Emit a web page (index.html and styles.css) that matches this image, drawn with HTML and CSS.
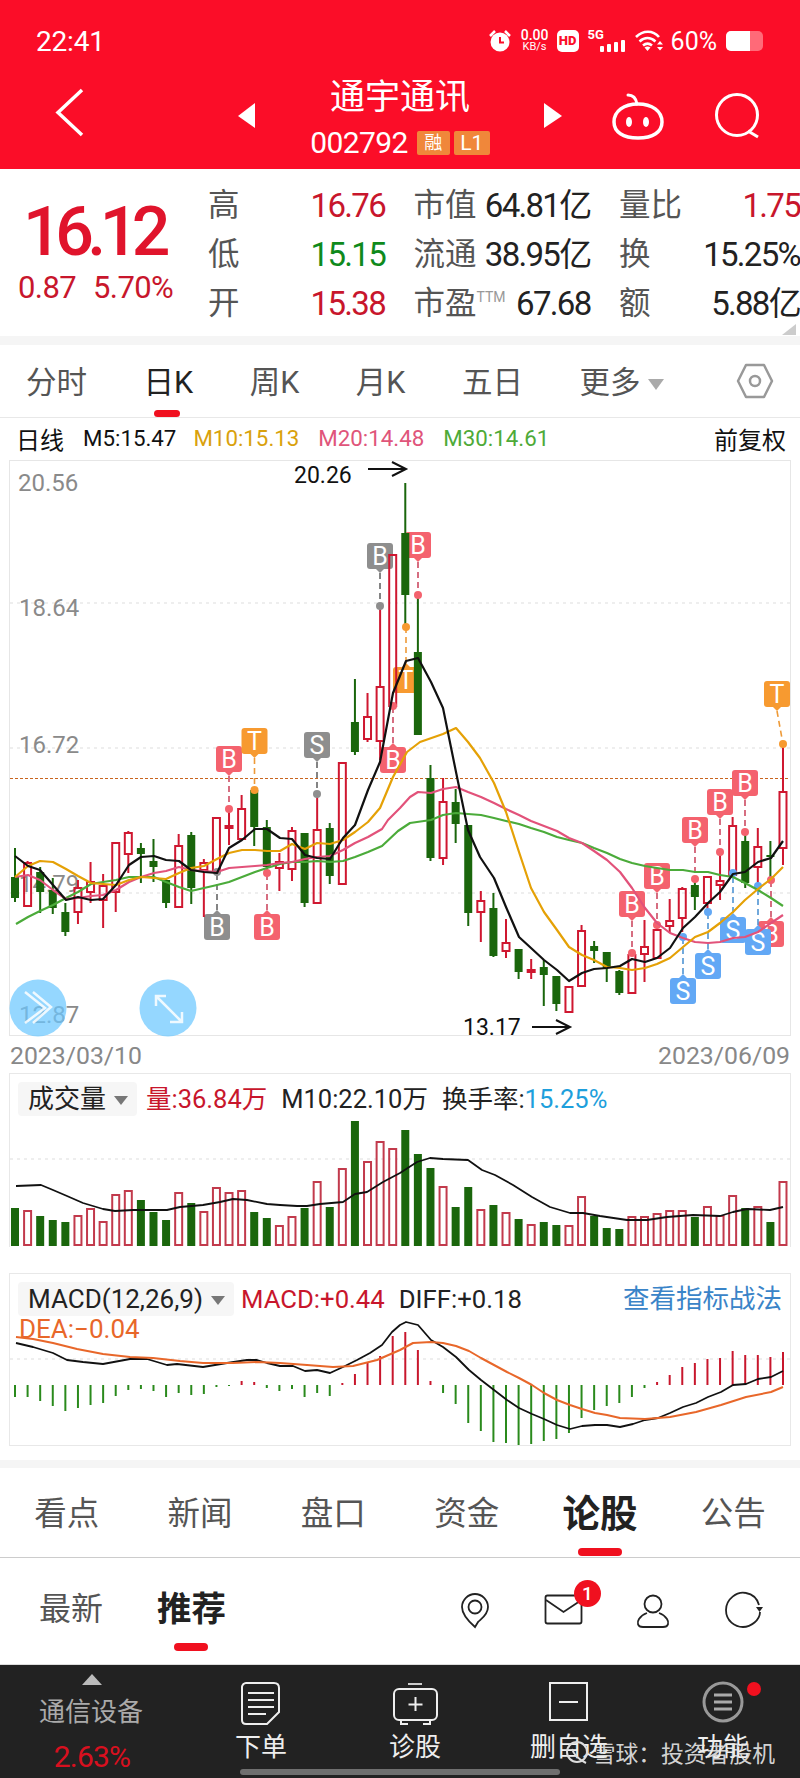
FILE: index.html
```html
<!DOCTYPE html>
<html lang="zh-CN">

<head>
    <meta charset="UTF-8">
    <meta name="viewport" content="width=device-width, initial-scale=1.0">
    <title>通宇通讯 002792</title>
    <link rel="stylesheet" href="styles.css">
</head>

<body>
    <div id="page">
        <div class="topbar">
            <div class="status">
                <span class="clock">22:41</span>
                <div class="status-icons">
                    <svg class="ico-alarm" viewBox="487 29 24 24">
                        <circle cx="499" cy="42" r="9.5" fill="#fff" />
                        <path d="M499 37v5.5h4" fill="none" stroke="#fb0d28" stroke-width="2" />
                        <path d="M489 36l5-5M509 36l-5-5" fill="none" stroke="#fff" stroke-width="2.5" />
                    </svg>
                    <div class="speed"><b>0.00</b><span>KB/s</span></div>
                    <span class="hd">HD</span>
                    <div class="signal">
                        <b>5G</b>
                        <i class="bar1"></i><i class="bar2"></i><i class="bar3"></i><i class="bar4"></i>
                    </div>
                    <svg class="ico-wifi" viewBox="632 29 30 24">
                        <path d="M634 37c7-7 17-7 23 0M637.500 41.500c5-4.500 11-4.500 16 0M641 45.500c3-2.500 6-2.500 9 0" fill="none" stroke="#fff" stroke-width="2.600" />
                        <path d="M645.500 51l-3-3.500c2-1.500 4-1.500 6 0z" fill="#fff" />
                        <path d="M655 44.500h6l-3-3.500zM655 47h6l-3 3.500z" fill="#fff" />
                    </svg>
                    <span class="battery-pct">60%</span>
                    <div class="battery"><i></i></div>
                </div>
            </div>
            <div class="nav">
                <div class="nav-left">
                    <svg class="ico-back" viewBox="54 88 32 52">
                        <path d="M82 91L58 113.500L82 136" fill="none" stroke="#fff" stroke-width="3.500" />
                    </svg>
                </div>
                <div class="nav-mid">
                    <svg class="ico-tri" viewBox="238 103 18 26"><path d="M255 103L238 116L255 128z" fill="#fff" /></svg>
                    <div class="stock">
                        <div class="stock-name">通宇通讯</div>
                        <div class="stock-code">002792<span class="tag">融</span><span class="tag tag-l1">L1</span></div>
                    </div>
                    <svg class="ico-tri" viewBox="544 103 18 26"><path d="M544 103L562 116L544 128z" fill="#fff" /></svg>
                </div>
                <div class="nav-right">
                    <svg class="ico-bot" viewBox="608 90 58 52">
                        <path d="M628 93c5 0 8 3 9 9" fill="none" stroke="#fff" stroke-width="3" stroke-linecap="round" />
                        <path d="M614 120c0-11 10-18 24-18s24 7 24 18c0 10-9 16-24 16s-24-6-24-16z" fill="none" stroke="#fff" stroke-width="3.500" />
                        <ellipse cx="629" cy="120" rx="3" ry="5" fill="#fff" />
                        <ellipse cx="646" cy="120" rx="3" ry="5" fill="#fff" />
                    </svg>
                    <svg class="ico-search" viewBox="712 90 50 50">
                        <circle cx="737" cy="114" r="20.500" fill="none" stroke="#fff" stroke-width="3" />
                        <path d="M748 130l10 6" fill="none" stroke="#fff" stroke-width="3" />
                    </svg>
                </div>
            </div>
        </div>

        <div class="quote">
            <div class="price-box">
                <div class="price">16.12</div>
                <div class="change"><span>0.87</span><span>5.70%</span></div>
            </div>
            <div class="stats">
                <div class="stat"><span class="k">高</span><span class="v red">16.76</span></div>
                <div class="stat"><span class="k">市值</span><span class="v">64.81亿</span></div>
                <div class="stat"><span class="k">量比</span><span class="v red">1.75</span></div>
                <div class="stat"><span class="k">低</span><span class="v green">15.15</span></div>
                <div class="stat"><span class="k">流通</span><span class="v">38.95亿</span></div>
                <div class="stat"><span class="k">换</span><span class="v">15.25%</span></div>
                <div class="stat"><span class="k">开</span><span class="v red">15.38</span></div>
                <div class="stat"><span class="k">市盈<sup>TTM</sup></span><span class="v">67.68</span></div>
                <div class="stat"><span class="k">额</span><span class="v">5.88亿</span></div>
            </div>
            <i class="corner"></i>
        </div>

        <div class="period-tabs">
            <span class="period">分时</span>
            <span class="period active">日K</span>
            <span class="period">周K</span>
            <span class="period">月K</span>
            <span class="period">五日</span>
            <span class="period">更多<i class="caret"></i></span>
            <svg class="ico-hex" viewBox="736 362 38 38">
                <path d="M746 365h18l8 16l-8 16h-18l-8-16z" fill="none" stroke="#999" stroke-width="2.500" stroke-linejoin="round" />
                <circle cx="755" cy="381" r="5" fill="none" stroke="#999" stroke-width="2.500" />
            </svg>
        </div>

        <div class="ma-legend">
            <span class="ma-name">日线</span>
            <span class="c-m5">M5:15.47</span>
            <span class="c-m10">M10:15.13</span>
            <span class="c-m20">M20:14.48</span>
            <span class="c-m30">M30:14.61</span>
            <span class="adjust">前复权</span>
        </div>

        <svg id="kline" class="kline" viewBox="0 458 800 584">
            <rect class="frame" x="9.500" y="460.500" width="781" height="575" />
            <path class="grid" d="M10 603H790M10 748H790M10 893H790" />
            <path class="last-price" d="M10 778.500H790" />
            <text class="axis" x="18" y="491">20.56</text>
            <text class="axis" x="19" y="616">18.64</text>
            <text class="axis" x="19" y="753">16.72</text>
            <text class="axis" x="19" y="892">14.79</text>
            <text class="axis" x="19" y="1023">12.87</text>
            <g id="marks"></g>
            <g id="candles"></g>
            <g id="dots"></g>
            <g id="ma-lines"></g>
            <text class="peak" x="294" y="483">20.26</text>
            <path class="peak-arrow" d="M368 469H405M392 462L406 469L392 476" />
            <text class="peak" x="463" y="1035">13.17</text>
            <path class="peak-arrow" d="M532 1027H569M556 1020L570 1027L556 1034" />
            <circle class="float-btn" cx="38" cy="1008" r="28.500" />
            <path class="float-ico" d="M25 992L45 1008L25 1023M33 992L51 1007L33 1023" />
            <circle class="float-btn" cx="168" cy="1008" r="28.500" />
            <path class="float-ico" d="M157 997L181 1021M156 1006V996H166M170 1022H182V1012" />
        </svg>

        <div class="dates"><span>2023/03/10</span><span>2023/06/09</span></div>

        <div class="panel panel-vol">
            <div class="panel-head">
                <span class="chip">成交量<i class="caret"></i></span>
                <span class="red">量:36.84万</span>
                <span>M10:22.10万</span>
                <span>换手率:<b class="blue">15.25%</b></span>
            </div>
            <svg id="volume" viewBox="9 1073 782 174">
                <path class="grid" d="M10 1159H790" />
                <g id="vol-bars"></g>
                <polyline id="vol-ma" class="line-thin" points="" />
            </svg>
        </div>

        <div class="panel panel-macd">
            <div class="panel-head">
                <span class="chip">MACD(12,26,9)<i class="caret"></i></span>
                <span class="red">MACD:+0.44</span>
                <span>DIFF:+0.18</span>
                <span class="macd-link">查看指标战法</span>
            </div>
            <div class="dea">DEA:−0.04</div>
            <svg id="macd" viewBox="9 1273 782 173">
                <path class="grid" d="M10 1359H790" />
                <g id="macd-bars"></g>
                <polyline id="dif" class="line-thin" points="" />
                <polyline id="dea" class="line-dea" points="" />
            </svg>
        </div>

        <div class="strip"></div>

        <div class="info-tabs">
            <span class="info-tab">看点</span>
            <span class="info-tab">新闻</span>
            <span class="info-tab">盘口</span>
            <span class="info-tab">资金</span>
            <span class="info-tab active">论股</span>
            <span class="info-tab">公告</span>
        </div>

        <div class="sub-tabs">
            <span class="sub-tab">最新</span>
            <span class="sub-tab active">推荐</span>
            <div class="sub-icons">
                <svg class="ico-pin" viewBox="456 1590 36 40">
                    <path d="M474 1627c-8-7-13-13-13-20c0-7 6-13 13-13s13 6 13 13c0 8-7 12-10 15z" fill="none" stroke="#222" stroke-width="1.800" />
                    <circle cx="474" cy="1607" r="6.500" fill="none" stroke="#222" stroke-width="1.800" />
                </svg>
                <div class="mail">
                    <svg class="ico-mail" viewBox="542 1592 42 35">
                        <rect x="544.500" y="1595.500" width="36" height="28" rx="2" fill="none" stroke="#222" stroke-width="1.800" />
                        <path d="M545 1600l17.500 12l18-12" fill="none" stroke="#222" stroke-width="1.800" />
                    </svg>
                    <span class="badge">1</span>
                </div>
                <svg class="ico-user" viewBox="634 1590 36 40">
                    <circle cx="652" cy="1604" r="8.500" fill="none" stroke="#222" stroke-width="1.800" />
                    <path d="M642 1627c-6 0-6-5-4-8c2-3 5-5 8-6M662 1627c6 0 6-5 4-8c-2-3-5-5-8-6M642 1627h20" fill="none" stroke="#222" stroke-width="1.800" />
                </svg>
                <svg class="ico-refresh" viewBox="722 1590 40 40">
                    <path d="M745 1593c-9-2-20 6-20 17s9 17 17 17s17-7 17-15" fill="none" stroke="#222" stroke-width="1.800" />
                    <path d="M745 1593c6 1 11 5 13 12" fill="none" stroke="#222" stroke-width="1.800" />
                    <path d="M755 1607h7l-3.500 5z" fill="#222" />
                </svg>
            </div>
        </div>

        <div class="bottom">
            <div class="sector">
                <i class="sector-up"></i>
                <span class="sector-name">通信设备</span>
                <span class="sector-pct">2.63%</span>
            </div>
            <div class="action">
                <svg viewBox="238 1680 46 46">
                    <path d="M246 1683h28c3 0 5 2 5 5v24l-12 12h-21c-3 0-4-2-4-4v-33c0-2 2-4 4-4z" fill="none" stroke="#eee" stroke-width="2" />
                    <path d="M248 1693h26M248 1700h26M248 1707h26M248 1714h18" fill="none" stroke="#eee" stroke-width="2" />
                </svg>
                <span>下单</span>
            </div>
            <div class="action">
                <svg viewBox="391 1680 46 46">
                    <path d="M407 1684h14" fill="none" stroke="#ccc" stroke-width="2" />
                    <rect x="393" y="1689" width="43" height="31" rx="5" fill="none" stroke="#eee" stroke-width="2" />
                    <path d="M414.500 1697v14M407.500 1704.500h14M400 1721v3h7M429 1721v3h-7" fill="none" stroke="#eee" stroke-width="2" />
                </svg>
                <span>诊股</span>
            </div>
            <div class="action">
                <svg viewBox="546 1680 46 46">
                    <rect x="550" y="1683" width="37" height="37" fill="none" stroke="#eee" stroke-width="2" />
                    <path d="M559 1702h19" fill="none" stroke="#eee" stroke-width="2" />
                </svg>
                <span>删自选</span>
            </div>
            <div class="action">
                <svg viewBox="700 1680 46 46">
                    <circle cx="723" cy="1702" r="19" fill="none" stroke="#999" stroke-width="3" />
                    <path d="M714 1695h18M714 1702h18M714 1709h18" fill="none" stroke="#aaa" stroke-width="3" />
                </svg>
                <span>功能</span>
                <i class="action-dot"></i>
            </div>
            <div class="watermark">
                <svg viewBox="0 0 26 26">
                    <circle cx="12" cy="12" r="10" fill="none" stroke="#ddd" stroke-width="2" />
                    <path d="M7 9c2 6 6 10 14 14" fill="none" stroke="#ddd" stroke-width="2" />
                </svg>
                <span>雪球：投资者股机</span>
            </div>
            <i class="home-bar"></i>
        </div>
    </div>
    <script src="chart.js"></script>
</body>

</html>
```

FILE: styles.css
```css
* {
    box-sizing: border-box;
}

body {
    margin: 0;
    background: #fff;
    font-family: Roboto, "Noto Sans CJK SC", sans-serif;
    color: #222;
}

#page {
    width: 800px;
    height: 1778px;
    overflow: hidden;
    display: flex;
    flex-direction: column;
}

svg {
    display: block;
}

i {
    font-style: normal;
}

.red {
    color: #c8162c;
}

.green {
    color: #0f8a1c;
}

.blue {
    color: #1e9fdc;
    font-weight: normal;
}

/* top red part */
.topbar {
    height: 169px;
    flex: none;
    background: #fb0d28;
    color: #fff;
}

.status {
    height: 72px;
    padding: 10px 37px 0 36px;
    display: flex;
    align-items: center;
    justify-content: space-between;
}

.clock {
    font-size: 28px;
    letter-spacing: -0.2px;
}

.status-icons {
    display: flex;
    align-items: center;
}

.ico-alarm {
    width: 24px;
    height: 24px;
}

.speed {
    width: 30px;
    margin: 0 7px 0 8px;
    display: flex;
    flex-direction: column;
    align-items: center;
    line-height: 11px;
}

.speed b {
    font-size: 14px;
    font-weight: 500;
}

.speed span {
    font-size: 11px;
}

.hd {
    width: 22px;
    height: 22px;
    border-radius: 5px;
    background: #fff;
    color: #fb0d28;
    font-size: 13px;
    font-weight: 900;
    line-height: 22px;
    text-align: center;
}

.signal {
    position: relative;
    width: 37px;
    height: 22px;
    margin: 0 9px 0 9px;
    display: flex;
    justify-content: flex-end;
    align-items: flex-end;
    gap: 3px;
}

.signal b {
    position: absolute;
    left: 0;
    top: -3px;
    font-size: 13px;
    font-weight: 700;
}

.signal i {
    width: 4px;
    background: #fff;
    border-radius: 1px;
}

.bar1 { height: 6px; }
.bar2 { height: 8px; }
.bar3 { height: 10px; }
.bar4 { height: 12px; }

.ico-wifi {
    width: 30px;
    height: 24px;
}

.battery-pct {
    margin: 0 9px 0 7px;
    font-size: 25px;
}

.battery {
    width: 37px;
    height: 20px;
    border-radius: 5px;
    background: #ff6a78;
}

.battery i {
    display: block;
    width: 24px;
    height: 20px;
    background: #fff;
    border-radius: 5px 0 0 5px;
}

.nav {
    height: 97px;
    padding: 4px 0 13px;
    display: grid;
    grid-template-columns: 238px 324px 238px;
    align-items: center;
}

.ico-back {
    width: 32px;
    height: 52px;
    margin: 0 0 6px 54px;
}

.nav-mid {
    display: flex;
    align-items: center;
    justify-content: space-between;
}

.ico-tri {
    width: 18px;
    height: 26px;
}

.stock {
    display: flex;
    flex-direction: column;
    align-items: center;
}

.stock-name {
    font-size: 35px;
    line-height: 43px;
    margin-bottom: 10px;
}

.stock-code {
    display: flex;
    align-items: center;
    height: 27px;
    font-size: 30px;
    letter-spacing: -0.6px;
}

.tag {
    width: 33px;
    height: 24px;
    margin-left: 9px;
    border-radius: 2px;
    background: #f0873a;
    font-size: 18px;
    line-height: 24px;
    text-align: center;
    letter-spacing: 0;
}

.tag-l1 {
    width: 36px;
    margin-left: 4px;
    font-size: 21px;
}

.nav-right {
    display: flex;
    align-items: center;
    padding-left: 46px;
}

.ico-bot {
    width: 58px;
    height: 52px;
    margin-top: 4px;
}

.ico-search {
    width: 50px;
    height: 50px;
    margin-left: 46px;
}

/* price and stats */
.quote {
    position: relative;
    height: 176px;
    flex: none;
    display: flex;
    border-bottom: 9px solid #f5f5f5;
}

.price-box {
    width: 208px;
    flex: none;
    padding: 32px 0 0 18px;
}

.price {
    font-size: 68px;
    line-height: 62px;
    font-weight: 500;
    letter-spacing: -6.500px;
    color: #e0142c;
    margin-left: 5px;
}

.change {
    display: flex;
    gap: 17px;
    margin-top: 8px;
    font-size: 31px;
    line-height: 34px;
    letter-spacing: -0.600px;
    color: #c8162c;
}

.stats {
    flex: 1;
    padding-top: 12px;
    display: grid;
    grid-template-columns: 177px 177px 181px;
    column-gap: 28.500px;
    grid-auto-rows: 49px;
    align-items: center;
}

.stat {
    display: flex;
    justify-content: space-between;
    align-items: center;
    white-space: nowrap;
}

.k {
    font-size: 31.500px;
    line-height: 40px;
    color: #555;
}

.k sup {
    font-size: 14px;
    line-height: 14px;
    color: #999;
    vertical-align: 12px;
}

.v {
    font-size: 33px;
    line-height: 40px;
    letter-spacing: -1.700px;
}

.corner {
    position: absolute;
    right: 4px;
    bottom: 1px;
    border-style: solid;
    border-width: 0 0 11px 14px;
    border-color: transparent transparent #ccc transparent;
}

/* k line period tabs */
.period-tabs {
    height: 73px;
    flex: none;
    padding: 4px 26px 0 26px;
    display: flex;
    align-items: center;
    gap: 56.500px;
    border-bottom: 1px solid #e8e8e8;
}

.period {
    position: relative;
    font-size: 30.500px;
    line-height: 40px;
    color: #555;
    white-space: nowrap;
}

.period.active {
    color: #222;
}

.period.active::after {
    content: "";
    position: absolute;
    left: 10px;
    bottom: -14px;
    width: 26px;
    height: 7px;
    border-radius: 4px;
    background: #f0101f;
}

.caret {
    display: inline-block;
    margin: 0 0 3px 8px;
    border-style: solid;
    border-width: 11px 8px 0 8px;
    border-color: #aaa transparent transparent transparent;
}

.ico-hex {
    width: 38px;
    height: 38px;
    margin-left: auto;
    margin-bottom: 4px;
}

.ma-legend {
    height: 40px;
    flex: none;
    padding: 0 14px 0 16px;
    display: flex;
    align-items: center;
    gap: 19px;
    font-size: 22.300px;
    color: #111;
    white-space: nowrap;
}

.ma-name {
    font-size: 24px;
}

.c-m5 {
    margin-right: -2px;
}

.c-m10 {
    color: #d9a10c;
}

.c-m20 {
    color: #e0557a;
}

.c-m30 {
    color: #4eaa38;
}

.adjust {
    margin-left: auto;
    font-size: 24px;
}

/* chart */
.kline {
    width: 800px;
    height: 584px;
    flex: none;
}

.frame {
    fill: none;
    stroke: #e6e6e6;
}

.grid {
    fill: none;
    stroke: #ddd;
    stroke-dasharray: 3 4;
}

.last-price {
    fill: none;
    stroke: #c8641e;
    stroke-dasharray: 3 2;
}

.axis {
    font-size: 24px;
    fill: #8a8a8a;
}

.peak {
    font-size: 23px;
    fill: #111;
}

.peak-arrow {
    fill: none;
    stroke: #111;
    stroke-width: 2;
}

.body-g {
    fill: #1a660c;
}

.body-r {
    fill: none;
    stroke: #cf1730;
    stroke-width: 2;
}

.wick-g {
    stroke: #1a660c;
    stroke-width: 2;
}

.wick-r {
    stroke: #cf1730;
    stroke-width: 2;
}

.ma {
    fill: none;
    stroke-width: 2.200;
    stroke-linejoin: round;
}

.ma-5 { stroke: #111; }
.ma-10 { stroke: #e5a106; }
.ma-20 { stroke: #e2527a; }
.ma-30 { stroke: #4bab3a; }

.mark-r { fill: #f4626e; }
.mark-k { fill: #8e8e8e; }
.mark-b { fill: #62a8f5; }
.mark-o { fill: #f79a30; }

.dash-r { stroke: #cc4a62; }
.dash-k { stroke: #666; }
.dash-b { stroke: #4f94d4; }
.dash-o { stroke: #ee9a38; }

.dash {
    stroke-width: 1.600;
    stroke-dasharray: 6 4;
    fill: none;
}

.mark-text {
    font-size: 25px;
    fill: #fff;
    text-anchor: middle;
}

.float-btn {
    fill: #6cc8ff;
    fill-opacity: .72;
}

.float-ico {
    fill: none;
    stroke: #fff;
    stroke-width: 2.500;
    stroke-opacity: .85;
}

.dates {
    height: 31px;
    flex: none;
    padding: 0 10px 4px;
    display: flex;
    justify-content: space-between;
    align-items: center;
    font-size: 24.800px;
    color: #888;
}

/* volume and macd */
.panel {
    position: relative;
    width: 782px;
    flex: none;
    margin-left: 9px;
}

.panel svg {
    width: 782px;
}

.panel-vol {
    height: 174px;
}

.panel-vol svg {
    height: 174px;
}

.panel-macd {
    height: 173px;
    margin-top: 26px;
}

.panel-macd svg {
    height: 173px;
}

.panel-vol::before,
.panel-macd::before {
    content: "";
    position: absolute;
    inset: 0;
    border: 1px solid #e8e8e8;
    pointer-events: none;
}

.panel-vol::before {
    border-bottom: 0;
}

.panel-head {
    position: absolute;
    left: 9px;
    top: 9px;
    right: 9px;
    display: flex;
    align-items: center;
    gap: 14px;
    font-size: 25.500px;
    line-height: 34px;
    white-space: nowrap;
}

.panel-macd .panel-head {
    font-size: 25.700px;
}

.chip {
    display: flex;
    align-items: center;
    height: 34px;
    margin-right: -5px;
    padding: 0 9px 0 10px;
    border-radius: 4px;
    background: #f6f6f6;
    font-size: 26px;
}

.panel-macd .chip {
    margin-right: -7px;
    font-size: 26px;
}

.chip .caret {
    margin: 2px 0 0 8px;
    border-width: 9px 7px 0 7px;
    border-color: #777 transparent transparent transparent;
}

.macd-link {
    margin-left: auto;
    color: #3a84c8;
    font-size: 26.500px;
}

.dea {
    position: absolute;
    left: 10px;
    top: 40px;
    font-size: 26px;
    line-height: 32px;
    color: #e8672a;
}

.bar-g {
    fill: #1a660c;
}

.bar-r {
    fill: none;
    stroke: #c23a4c;
    stroke-width: 2;
}

.hist-g {
    stroke: #2a8a1c;
    stroke-width: 2;
}

.hist-r {
    stroke: #c8162c;
    stroke-width: 2;
}

.line-thin {
    fill: none;
    stroke: #111;
    stroke-width: 1.800;
    stroke-linejoin: round;
}

.line-dea {
    fill: none;
    stroke: #e8672a;
    stroke-width: 2;
    stroke-linejoin: round;
}

.strip {
    height: 8px;
    margin-top: 14px;
    flex: none;
    background: #f5f5f5;
}

/* lower tabs */
.info-tabs {
    height: 90px;
    flex: none;
    display: flex;
    align-items: center;
    border-bottom: 1px solid #ccc;
    padding-top: 3px;
}

.info-tab {
    position: relative;
    flex: 1;
    text-align: center;
    font-size: 32.500px;
    line-height: 44px;
    color: #555;
}

.info-tab.active {
    font-size: 37.500px;
    font-weight: 700;
    color: #222;
}

.info-tab.active::after {
    content: "";
    position: absolute;
    left: 45px;
    bottom: -20px;
    width: 44px;
    height: 8px;
    border-radius: 4px;
    background: #f0101f;
}

.sub-tabs {
    height: 107px;
    flex: none;
    display: flex;
    align-items: center;
    padding: 0 37px 5px 39px;
    border-bottom: 1px solid #ddd;
}

.sub-tab {
    position: relative;
    font-size: 32px;
    line-height: 44px;
    color: #555;
}

.sub-tab.active {
    margin-left: 54px;
    font-size: 34.500px;
    font-weight: 700;
    color: #222;
}

.sub-tab.active::after {
    content: "";
    position: absolute;
    left: 17px;
    bottom: -20px;
    width: 34px;
    height: 8px;
    border-radius: 4px;
    background: #f0101f;
}

.sub-icons {
    margin-left: auto;
    margin-top: 2px;
    display: flex;
    align-items: center;
}

.ico-pin,
.ico-user {
    width: 36px;
    height: 40px;
}

.mail {
    position: relative;
    margin: 0 50px 0 50px;
}

.ico-mail {
    width: 42px;
    height: 35px;
}

.badge {
    position: absolute;
    left: 31px;
    top: -12px;
    width: 27px;
    height: 27px;
    border-radius: 50%;
    background: #f0101f;
    color: #fff;
    font-size: 19px;
    font-weight: 500;
    line-height: 27px;
    text-align: center;
}

.ico-refresh {
    width: 40px;
    height: 40px;
    margin-left: 52px;
}

/* bottom bar */
.bottom {
    position: relative;
    flex: 1;
    background: #222;
    display: flex;
    color: #eee;
}

.sector {
    width: 184px;
    flex: none;
    display: flex;
    flex-direction: column;
    align-items: center;
    padding-top: 9px;
    font-size: 26px;
}

.sector-up {
    border-style: solid;
    border-width: 0 10px 11px 10px;
    border-color: transparent transparent #bbb transparent;
}

.sector-name {
    width: 106px;
    margin: 9px 0 0;
    line-height: 36px;
    color: #aaa;
    white-space: nowrap;
}

.sector-pct {
    margin-top: 12px;
    font-size: 30px;
    line-height: 30px;
    letter-spacing: -0.800px;
    color: #d8101f;
}

.action {
    position: relative;
    flex: 1;
    display: flex;
    flex-direction: column;
    align-items: center;
    padding-top: 15px;
    font-size: 26px;
    line-height: 34px;
}

.action svg {
    width: 46px;
    height: 46px;
}

.action span {
    margin-top: 4px;
}

.action-dot {
    position: absolute;
    left: 101px;
    top: 17px;
    width: 14px;
    height: 14px;
    border-radius: 50%;
    background: #f0101f;
}

.watermark {
    position: absolute;
    right: 25px;
    top: 71px;
    display: flex;
    align-items: center;
    gap: 2px;
    font-size: 22.800px;
    color: rgb(235 235 235 / 90%);
    white-space: nowrap;
}

.watermark svg {
    width: 26px;
    height: 26px;
}

.home-bar {
    position: absolute;
    left: 240px;
    bottom: 3px;
    width: 320px;
    height: 6px;
    border-radius: 3px;
    background: #6f6f6f;
}
```

FILE: chart.js
```js
// x of candle number i, the same for all three charts
function xOf(i) {
    return 15 + 12.59 * i;
}

// type, high, body top, body bottom, low (pixels of the page)
var candles = [
    ["g", 848, 877, 898, 902], ["r", 861, 863, 906, 906], ["g", 867, 872, 892, 913], ["g", 878, 890, 908, 914],
    ["g", 903, 912, 932, 936], ["r", 880, 888, 912, 924], ["r", 862, 882, 892, 903], ["r", 874, 886, 900, 928],
    ["r", 843, 843, 892, 912], ["r", 831, 833, 854, 873], ["g", 843, 848, 854, 883], ["g", 839, 861, 867, 882],
    ["g", 878, 880, 903, 908], ["r", 834, 846, 907, 907], ["g", 832, 835, 888, 904], ["r", 859, 863, 870, 917],
    ["r", 818, 818, 872, 872], ["r", 808, 826, 828, 845], ["r", 795, 809, 839, 839], ["g", 788, 790, 827, 846],
    ["g", 820, 827, 867, 873], ["r", 853, 862, 868, 891], ["r", 827, 831, 869, 881], ["g", 833, 833, 903, 907],
    ["r", 793, 830, 903, 903], ["g", 823, 828, 876, 884], ["r", 763, 763, 884, 884], ["g", 679, 722, 752, 755],
    ["r", 693, 717, 739, 742], ["r", 605, 687, 741, 760], ["r", 555, 555, 706, 708], ["g", 483, 533, 595, 627],
    ["g", 595, 652, 735, 735], ["g", 765, 778, 858, 861], ["r", 778, 802, 858, 865], ["g", 789, 802, 824, 843],
    ["g", 825, 825, 913, 926], ["r", 891, 901, 912, 942], ["g", 893, 908, 956, 957], ["r", 919, 943, 951, 958],
    ["g", 949, 949, 972, 979], ["r", 959, 970, 972, 979], ["g", 960, 967, 975, 1006], ["g", 976, 976, 1004, 1011],
    ["r", 987, 987, 1012, 1013], ["r", 925, 931, 986, 986], ["g", 941, 946, 951, 963], ["g", 952, 952, 968, 982],
    ["g", 970, 971, 993, 995], ["r", 950, 955, 993, 993], ["r", 920, 947, 954, 982], ["r", 925, 930, 958, 958],
    ["r", 899, 921, 926, 933], ["r", 887, 889, 918, 932], ["g", 880, 885, 897, 910], ["r", 877, 877, 903, 910],
    ["r", 852, 881, 885, 900], ["r", 817, 826, 875, 875], ["g", 832, 841, 883, 888], ["r", 828, 847, 867, 888],
    ["g", 841, 855, 857, 880], ["r", 743, 792, 848, 865]
];

var maLines = {
    "ma-30": "16,924 28,917 40,911 53,905 66,898 78,892 91,884 103,882 116,880 129,877 141,877 154,877 166,882 179,887 191,891 204,888 217,885 229,882 242,877 255,872 267,868 280,864 292,862 305,862 317,861 330,862 343,861 355,857 368,852 382,846 398,831 410,823 431,820 443,815 456,813 468,814 481,815 494,818 506,821 519,824 531,828 544,832 557,837 569,840 582,843 594,848 607,853 620,859 632,863 645,866 657,868 670,870 683,870 695,872 708,872 720,875 733,877 745,883 758,890 771,898 783,906",
    "ma-20": "15,877 28,875 40,880 53,890 66,899 78,898 91,896 103,895 116,890 129,882 141,877 154,873 166,871 179,867 191,870 204,871 217,872 229,868 242,867 255,866 267,865 280,863 292,862 305,859 317,857 330,856 343,850 355,843 368,837 382,829 388,820 400,808 410,797 418,792 431,793 443,789 456,787 468,792 481,797 494,803 506,809 519,815 531,821 544,826 557,831 569,838 582,843 594,851 607,860 620,872 632,888 645,908 657,923 670,933 683,938 695,942 708,943 720,942 733,938 745,937 758,932 771,923 783,915",
    "ma-10": "15,877 28,866 40,861 53,862 66,869 78,876 91,883 103,884 116,885 129,880 141,877 154,878 166,879 179,873 191,868 204,866 217,859 229,853 242,850 255,850 267,851 280,851 292,844 305,849 317,843 330,844 343,840 355,832 368,822 380,808 393,777 407,752 420,742 443,734 456,728 468,742 480,758 494,783 506,812 519,852 531,888 544,912 557,930 569,947 582,955 594,960 607,967 620,968 632,970 645,968 657,964 670,958 683,947 695,937 708,932 720,923 733,912 745,900 758,889 771,879 783,867",
    "ma-5": "15,856 28,866 40,870 53,885 66,900 78,897 91,900 103,899 116,885 129,865 141,857 154,856 166,860 179,861 191,870 204,872 217,873 229,848 242,840 255,829 267,829 280,838 292,839 305,855 317,858 330,859 343,838 355,825 368,790 380,762 393,693 406,661 418,658 431,682 443,708 456,772 468,830 480,857 494,878 506,907 519,937 531,948 544,960 557,970 569,981 582,973 594,969 607,968 620,966 632,959 645,962 657,958 670,948 683,928 695,917 708,903 720,892 733,874 745,872 758,862 771,858 783,841"
};

// center x, box top, pointer side, letter, colour, y of the dot, x of the dot
var marks = [
    [229, 746, "down", "B", "r", 809], [254.500, 728, "down", "T", "o", 790], [317, 732, "down", "S", "k", 794],
    [380, 543, "down", "B", "k", 606], [418, 532, "down", "B", "r", 595], [406, 667, "up", "T", "o", 627],
    [393, 747, "up", "B", "r", 706], [217, 914, "up", "B", "k", 872], [267, 914, "up", "B", "r", 873],
    [632, 891, "down", "B", "r", 953], [657, 863, "down", "B", "r", 925], [695, 817, "down", "B", "r", 879],
    [720, 789, "down", "B", "r", 852], [745, 770, "down", "B", "r", 832], [683, 978, "up", "S", "b", 937],
    [708, 953, "up", "S", "b", 912], [733, 917, "up", "S", "b", 873], [771, 921, "up", "B", "r", 880],
    [758, 929, "up", "S", "b", 886], [777, 681, "down", "T", "o", 744, 783]
];

// top of each volume bar, the colour is the one of the candle above it
var volumeTops = [
    1208, 1211, 1216, 1220, 1222, 1216, 1209, 1222, 1195, 1191, 1200, 1212, 1220, 1193, 1203, 1212,
    1188, 1193, 1191, 1212, 1218, 1226, 1217, 1208, 1182, 1207, 1169, 1121, 1162, 1142, 1149, 1130,
    1154, 1168, 1187, 1207, 1187, 1210, 1205, 1213, 1219, 1225, 1222, 1225, 1226, 1197, 1216, 1228,
    1229, 1217, 1217, 1214, 1211, 1211, 1217, 1207, 1216, 1196, 1208, 1207, 1222, 1182
];
var volumeMa = "16,1186 41,1185 53,1190 67,1196 83,1203 103,1209 115,1211 133,1210 153,1210 167,1210 180,1207 203,1205 220,1202 233,1199 247,1200 267,1204 280,1205 297,1206 307,1206 320,1204 343,1202 355,1194 367,1192 383,1182 400,1173 417,1162 430,1158 443,1159 468,1160 482,1170 495,1175 513,1185 532,1197 550,1207 570,1213 583,1213 600,1216 627,1220 647,1220 667,1217 693,1215 720,1216 733,1212 747,1209 770,1210 783,1207";

var macdZero = 1385;
var macdEnds = [
    1397, 1397, 1401, 1406, 1411, 1408, 1405, 1403, 1396, 1390, 1389, 1391, 1397, 1393, 1395, 1394,
    1387, 1386, 1381, 1382, 1388, 1391, 1389, 1397, 1393, 1396, 1383, 1374, 1363, 1356, 1336, 1332,
    1350, 1381, 1393, 1404, 1423, 1431, 1442, 1443, 1445, 1444, 1441, 1439, 1433, 1418, 1410, 1406,
    1403, 1397, 1388, 1382, 1375, 1367, 1363, 1359, 1358, 1351, 1355, 1355, 1357, 1352
];
var difLine = "16,1343 33,1347 53,1353 67,1360 83,1362 103,1364 130,1359 147,1359 167,1365 177,1364 203,1367 227,1363 247,1360 257,1360 267,1363 280,1366 293,1366 305,1371 317,1370 330,1373 343,1367 357,1360 370,1353 382,1345 392,1332 400,1325 406,1322 418,1325 431,1340 443,1347 456,1357 469,1370 481,1380 494,1390 507,1400 519,1408 532,1414 544,1419 557,1425 570,1429 582,1426 595,1425 607,1425 620,1427 633,1424 645,1420 658,1418 670,1413 683,1407 696,1403 708,1397 721,1392 733,1385 746,1384 758,1379 771,1377 783,1371";
var deaLine = "16,1337 33,1339 53,1343 77,1349 103,1354 130,1357 153,1358 180,1361 203,1363 233,1363 257,1362 280,1363 307,1365 333,1367 353,1366 377,1360 400,1350 413,1343 431,1342 443,1343 456,1346 469,1351 481,1358 494,1365 507,1372 519,1378 532,1385 544,1393 557,1400 570,1405 582,1409 595,1413 607,1415 620,1418 645,1419 670,1417 696,1412 721,1405 746,1397 771,1392 783,1387";

function drawCandles() {
    var html = "";
    for (var i = 0; i < candles.length; i++) {
        var c = candles[i];
        var x = xOf(i);
        html += '<path class="wick-' + c[0] + '" d="M' + x + " " + c[1] + "V" + c[2] + "M" + x + " " + c[3] + "V" + c[4] + '"/>';
        if (c[0] == "g") {
            html += '<rect class="body-g" x="' + (x - 4) + '" y="' + c[2] + '" width="8" height="' + (c[3] - c[2]) + '"/>';
        } else {
            html += '<rect class="body-r" x="' + (x - 3.5) + '" y="' + c[2] + '" width="7" height="' + (c[3] - c[2]) + '"/>';
        }
    }
    document.getElementById("candles").innerHTML = html;
}

function drawMarks() {
    var html = "";
    var dots = "";
    for (var i = 0; i < marks.length; i++) {
        var m = marks[i];
        var x = m[0], top = m[1], color = m[4], dotY = m[5];
        var dotX = m[6] || x;
        var tip = m[2] == "down" ? top + 30 : top - 4;
        var base = m[2] == "down" ? top + 26 : top;
        html += '<path class="dash dash-' + color + '" d="M' + x + " " + tip + "L" + dotX + " " + dotY + '"/>';
        html += '<rect class="mark-' + color + '" x="' + (x - 13) + '" y="' + top + '" width="26" height="26" rx="3"/>';
        html += '<path class="mark-' + color + '" d="M' + (x - 4) + " " + base + "L" + x + " " + tip + "L" + (x + 4) + " " + base + 'z"/>';
        html += '<text class="mark-text" x="' + x + '" y="' + (top + 22) + '">' + m[3] + "</text>";
        dots += '<circle class="mark-' + color + '" cx="' + dotX + '" cy="' + dotY + '" r="4"/>';
    }
    document.getElementById("marks").innerHTML = html;
    document.getElementById("dots").innerHTML = dots;
}

function drawMaLines() {
    var html = "";
    for (var name in maLines) {
        html += '<polyline class="ma ' + name + '" points="' + maLines[name] + '"/>';
    }
    document.getElementById("ma-lines").innerHTML = html;
}

function drawVolume() {
    var html = "";
    for (var i = 0; i < volumeTops.length; i++) {
        var x = xOf(i);
        var top = volumeTops[i];
        if (candles[i][0] == "g") {
            html += '<rect class="bar-g" x="' + (x - 4) + '" y="' + top + '" width="8" height="' + (1246 - top) + '"/>';
        } else {
            html += '<rect class="bar-r" x="' + (x - 3.5) + '" y="' + top + '" width="7" height="' + (1245 - top) + '"/>';
        }
    }
    document.getElementById("vol-bars").innerHTML = html;
    document.getElementById("vol-ma").setAttribute("points", volumeMa);
}

function drawMacd() {
    var html = "";
    for (var i = 0; i < macdEnds.length; i++) {
        var x = xOf(i);
        var cls = macdEnds[i] > macdZero ? "hist-g" : "hist-r";
        html += '<path class="' + cls + '" d="M' + x + " " + macdZero + "V" + macdEnds[i] + '"/>';
    }
    document.getElementById("macd-bars").innerHTML = html;
    document.getElementById("dif").setAttribute("points", difLine);
    document.getElementById("dea").setAttribute("points", deaLine);
}

drawMarks();
drawCandles();
drawMaLines();
drawVolume();
drawMacd();
```
